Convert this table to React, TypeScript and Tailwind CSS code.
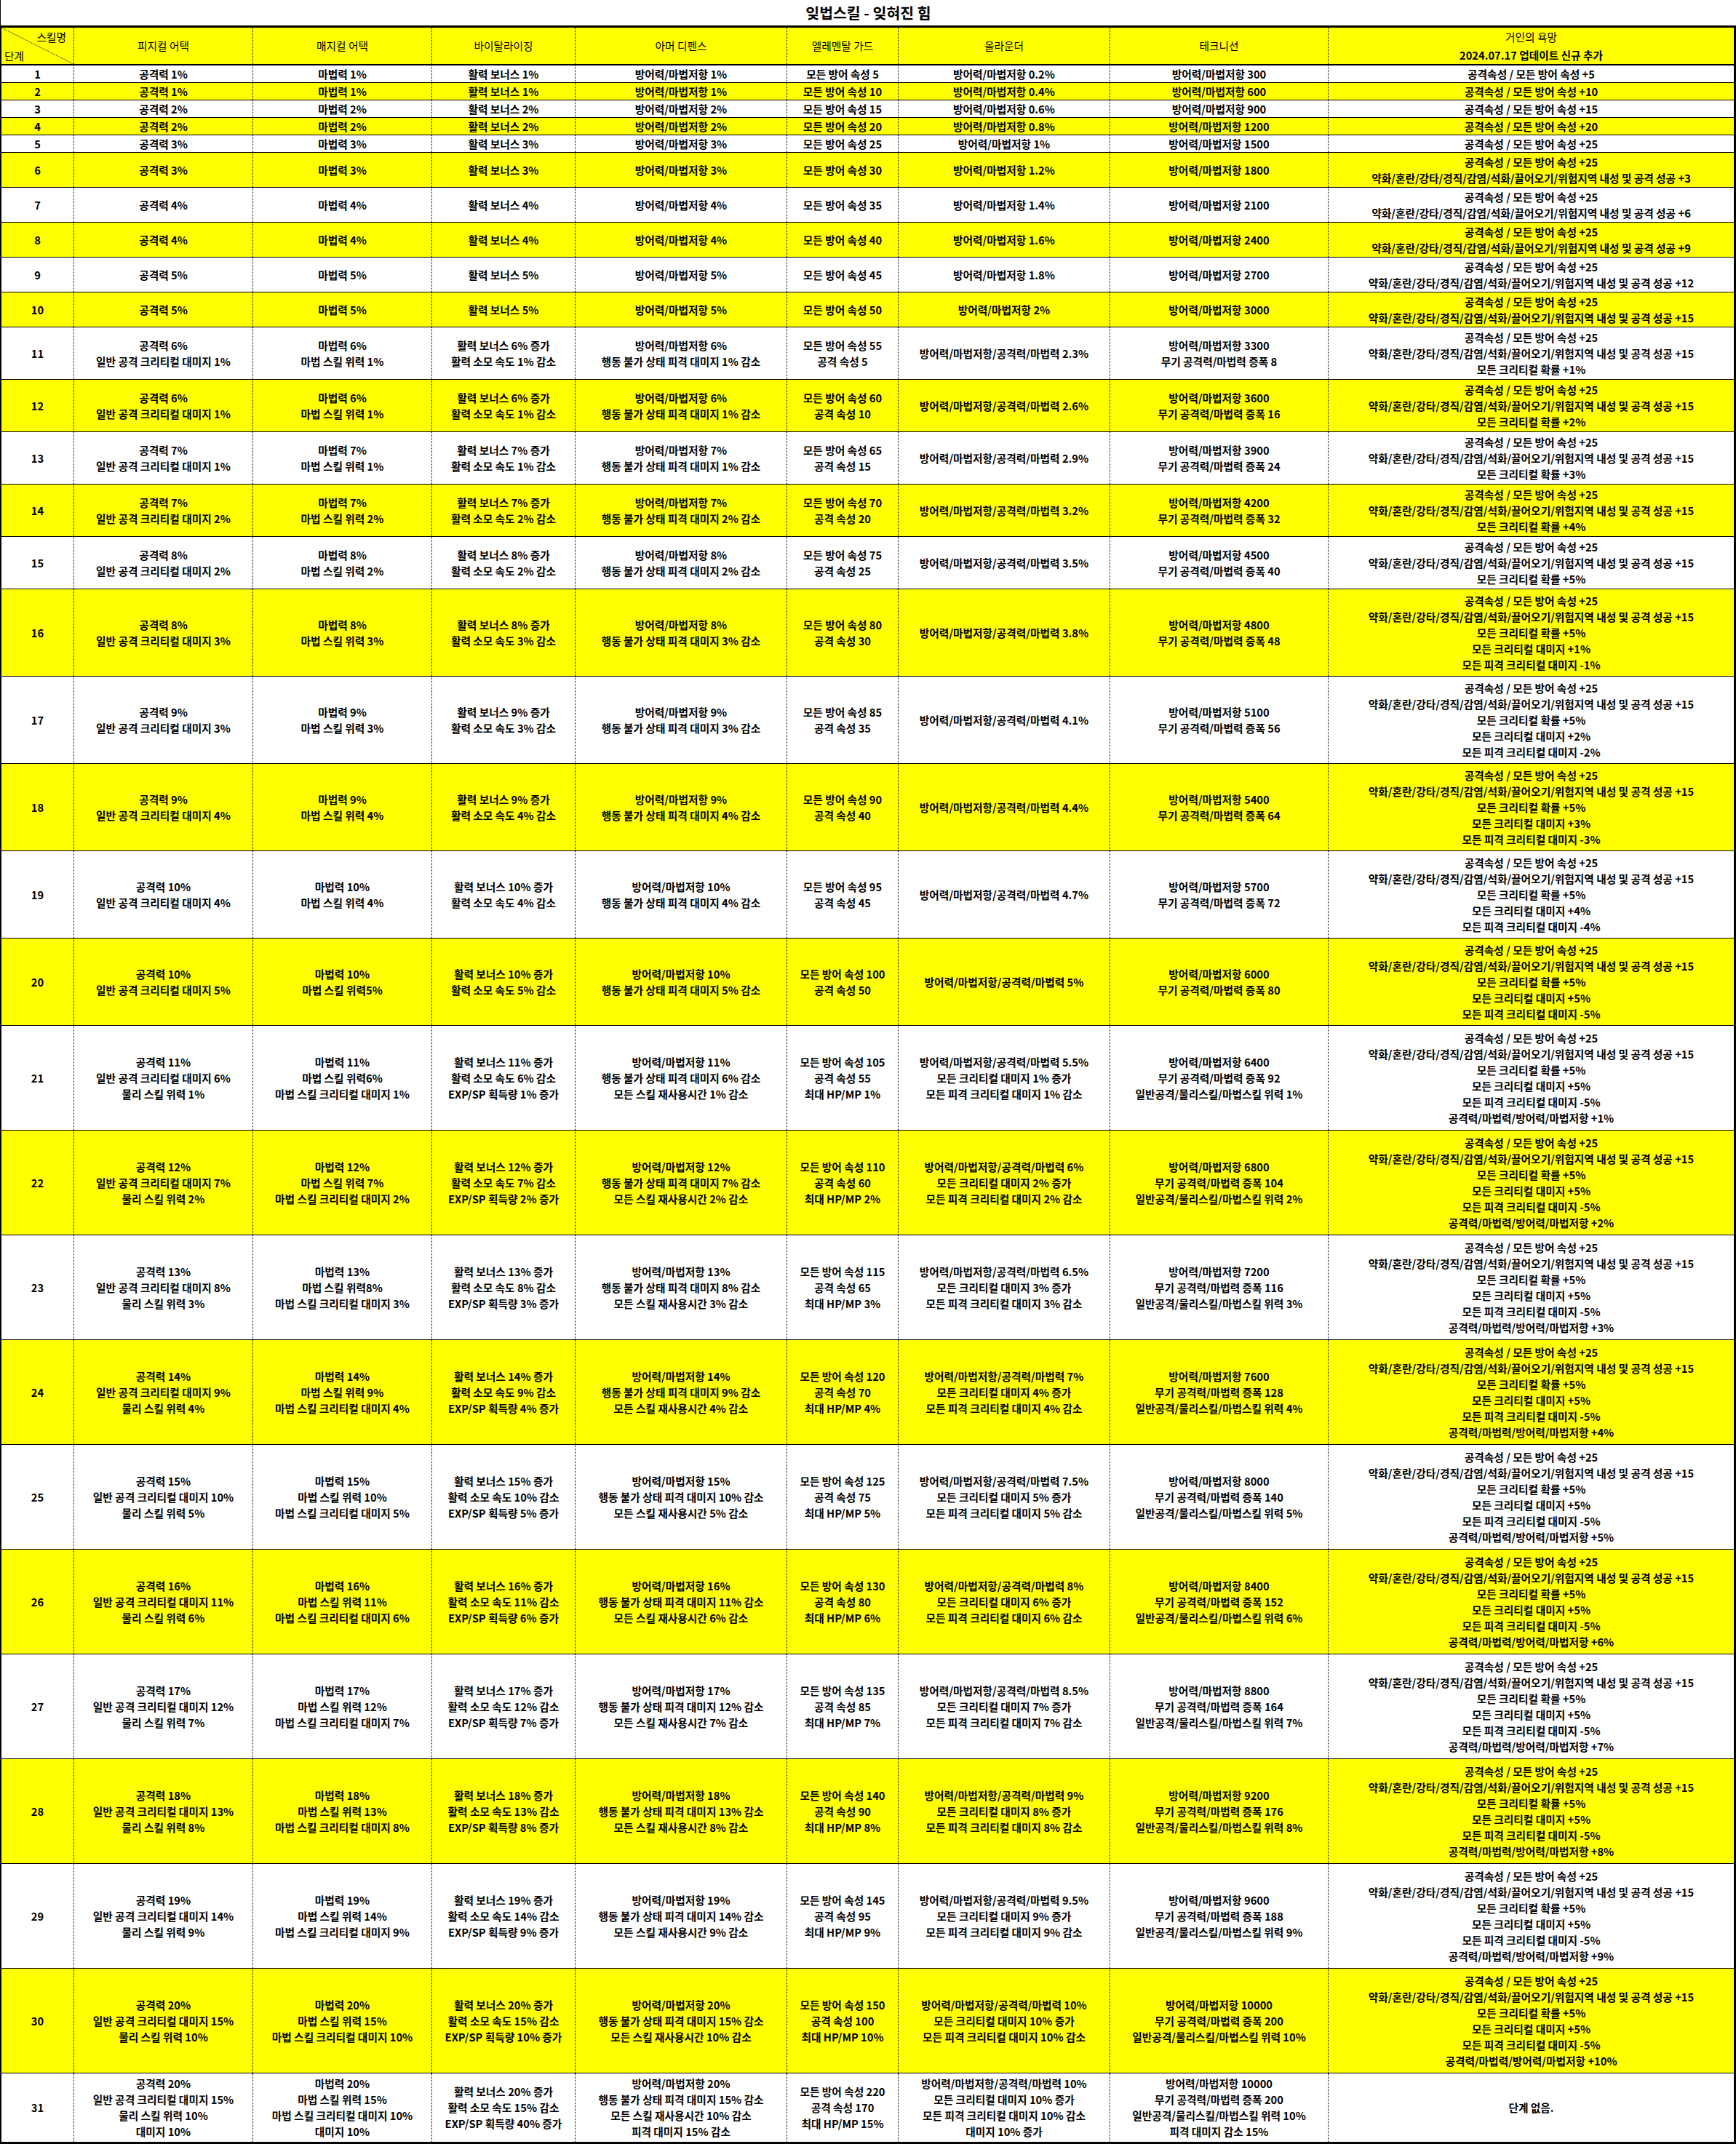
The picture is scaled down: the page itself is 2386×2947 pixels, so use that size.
import React from "react";

const GRID =
  "grid grid-cols-[100px_246px_246px_197px_291px_153px_291px_300px_557px]";

const HEADERS = [
  "피지컬 어택",
  "매지컬 어택",
  "바이탈라이징",
  "아머 디펜스",
  "엘레멘탈 가드",
  "올라운더",
  "테크니션",
];

// 11~20단계 크리티컬/소모 속도 값
const MID = [1, 1, 1, 2, 2, 3, 3, 4, 4, 5];

function fmt(v: number): string {
  return String(parseFloat(v.toFixed(1)));
}

function physical(n: number): string[] {
  const a = Math.ceil(n / 2);
  if (n <= 10) return [`공격력 ${a}%`];
  if (n <= 20) return [`공격력 ${a}%`, `일반 공격 크리티컬 대미지 ${MID[n - 11]}%`];
  if (n <= 30)
    return [
      `공격력 ${n - 10}%`,
      `일반 공격 크리티컬 대미지 ${n - 15}%`,
      `물리 스킬 위력 ${n - 20}%`,
    ];
  return ["공격력 20%", "일반 공격 크리티컬 대미지 15%", "물리 스킬 위력 10%", "대미지 10%"];
}

function magical(n: number): string[] {
  const a = Math.ceil(n / 2);
  // 원본 표의 띄어쓰기 그대로
  const gap = n === 20 || n === 21 || n === 23 ? "" : " ";
  if (n <= 10) return [`마법력 ${a}%`];
  if (n <= 20) return [`마법력 ${a}%`, `마법 스킬 위력${gap}${MID[n - 11]}%`];
  if (n <= 30)
    return [
      `마법력 ${n - 10}%`,
      `마법 스킬 위력${gap}${n - 15}%`,
      `마법 스킬 크리티컬 대미지 ${n - 20}%`,
    ];
  return ["마법력 20%", "마법 스킬 위력 15%", "마법 스킬 크리티컬 대미지 10%", "대미지 10%"];
}

function vital(n: number): string[] {
  const a = Math.ceil(n / 2);
  if (n <= 10) return [`활력 보너스 ${a}%`];
  if (n <= 20) return [`활력 보너스 ${a}% 증가`, `활력 소모 속도 ${MID[n - 11]}% 감소`];
  if (n <= 30)
    return [
      `활력 보너스 ${n - 10}% 증가`,
      `활력 소모 속도 ${n - 15}% 감소`,
      `EXP/SP 획득량 ${n - 20}% 증가`,
    ];
  return ["활력 보너스 20% 증가", "활력 소모 속도 15% 감소", "EXP/SP 획득량 40% 증가"];
}

function armor(n: number): string[] {
  const a = Math.ceil(n / 2);
  if (n <= 10) return [`방어력/마법저항 ${a}%`];
  if (n <= 20)
    return [`방어력/마법저항 ${a}%`, `행동 불가 상태 피격 대미지 ${MID[n - 11]}% 감소`];
  if (n <= 30)
    return [
      `방어력/마법저항 ${n - 10}%`,
      `행동 불가 상태 피격 대미지 ${n - 15}% 감소`,
      `모든 스킬 재사용시간 ${n - 20}% 감소`,
    ];
  return [
    "방어력/마법저항 20%",
    "행동 불가 상태 피격 대미지 15% 감소",
    "모든 스킬 재사용시간 10% 감소",
    "피격 대미지 15% 감소",
  ];
}

function elemental(n: number): string[] {
  if (n <= 10) return [`모든 방어 속성 ${n * 5}`];
  if (n <= 20) return [`모든 방어 속성 ${n * 5}`, `공격 속성 ${(n - 10) * 5}`];
  if (n <= 30)
    return [`모든 방어 속성 ${n * 5}`, `공격 속성 ${(n - 10) * 5}`, `최대 HP/MP ${n - 20}%`];
  return ["모든 방어 속성 220", "공격 속성 170", "최대 HP/MP 15%"];
}

function allround(n: number): string[] {
  if (n <= 10) return [`방어력/마법저항 ${fmt(n * 0.2)}%`];
  if (n <= 20) return [`방어력/마법저항/공격력/마법력 ${fmt(2 + (n - 10) * 0.3)}%`];
  if (n <= 30)
    return [
      `방어력/마법저항/공격력/마법력 ${fmt(5 + (n - 20) * 0.5)}%`,
      `모든 크리티컬 대미지 ${n - 20}% 증가`,
      `모든 피격 크리티컬 대미지 ${n - 20}% 감소`,
    ];
  return [
    "방어력/마법저항/공격력/마법력 10%",
    "모든 크리티컬 대미지 10% 증가",
    "모든 피격 크리티컬 대미지 10% 감소",
    "대미지 10% 증가",
  ];
}

function technician(n: number): string[] {
  if (n <= 10) return [`방어력/마법저항 ${n * 300}`];
  if (n <= 20) return [`방어력/마법저항 ${n * 300}`, `무기 공격력/마법력 증폭 ${(n - 10) * 8}`];
  if (n <= 30)
    return [
      `방어력/마법저항 ${6000 + (n - 20) * 400}`,
      `무기 공격력/마법력 증폭 ${80 + (n - 20) * 12}`,
      `일반공격/물리스킬/마법스킬 위력 ${n - 20}%`,
    ];
  return [
    "방어력/마법저항 10000",
    "무기 공격력/마법력 증폭 200",
    "일반공격/물리스킬/마법스킬 위력 10%",
    "피격 대미지 감소 15%",
  ];
}

const RESIST = "약화/혼란/강타/경직/감염/석화/끌어오기/위험지역 내성 및 공격 성공";

function giant(n: number): string[] {
  if (n <= 5) return [`공격속성 / 모든 방어 속성 +${n * 5}`];
  if (n <= 10) return ["공격속성 / 모든 방어 속성 +25", `${RESIST} +${(n - 5) * 3}`];
  if (n <= 15)
    return ["공격속성 / 모든 방어 속성 +25", `${RESIST} +15`, `모든 크리티컬 확률 +${n - 10}%`];
  if (n <= 20)
    return [
      "공격속성 / 모든 방어 속성 +25",
      `${RESIST} +15`,
      "모든 크리티컬 확률 +5%",
      `모든 크리티컬 대미지 +${n - 15}%`,
      `모든 피격 크리티컬 대미지 -${n - 15}%`,
    ];
  if (n <= 30)
    return [
      "공격속성 / 모든 방어 속성 +25",
      `${RESIST} +15`,
      "모든 크리티컬 확률 +5%",
      "모든 크리티컬 대미지 +5%",
      "모든 피격 크리티컬 대미지 -5%",
      `공격력/마법력/방어력/마법저항 +${n - 20}%`,
    ];
  return ["단계 없음."];
}

function rowHeight(n: number): string {
  if (n <= 5) return "h-[24px]";
  if (n <= 10) return "h-[48px]";
  if (n <= 15) return "h-[72px]";
  if (n <= 20) return "h-[120px]";
  if (n <= 30) return "h-[144px]";
  return "h-[94px]";
}

function Cell({ lines, last }: { lines: string[]; last?: boolean }) {
  return (
    <div
      className={`flex flex-col items-center justify-center text-center whitespace-nowrap leading-[22px] ${
        last ? "" : "border-r border-dotted border-black"
      }`}
    >
      {lines.map((l, i) => (
        <div key={i}>{l}</div>
      ))}
    </div>
  );
}

function DataRow({ n }: { n: number }) {
  const cols = [
    physical(n),
    magical(n),
    vital(n),
    armor(n),
    elemental(n),
    allround(n),
    technician(n),
    giant(n),
  ];
  return (
    <div
      className={`${GRID} ${rowHeight(n)} ${n % 2 === 0 ? "bg-[#ffff00]" : "bg-white"} ${
        n < 31 ? "border-b border-black" : ""
      }`}
    >
      <Cell lines={[String(n)]} />
      {cols.map((c, i) => (
        <Cell key={i} lines={c} last={i === cols.length - 1} />
      ))}
    </div>
  );
}

export default function App() {
  const rows = Array.from({ length: 31 }, (_, i) => i + 1);

  return (
    <div className="w-[2386px] bg-white text-black font-['Noto_Sans_CJK_KR',sans-serif] text-[14.7px] font-bold">
      {/* 제목 */}
      <div className="h-[35px] border-l border-black flex items-center justify-center text-[20.5px] font-bold">
        잊법스킬 - 잊혀진 힘
      </div>

      <div className="border-t-[3px] border-l-2 border-r-[3px] border-b-[3px] border-black">
        {/* 헤더 */}
        <div className={`${GRID} h-[52px] bg-[#ffff00] border-b-2 border-black font-normal`}>
          <div className="relative flex flex-col justify-between border-r border-dotted border-black pl-[4px] pr-[10px] pt-[3px] pb-0">
            <svg className="absolute inset-0 h-full w-full" preserveAspectRatio="none" viewBox="0 0 100 50">
              <line x1="0" y1="0" x2="100" y2="50" stroke="black" strokeWidth="1" strokeDasharray="1 1" vectorEffect="non-scaling-stroke" />
            </svg>
            <span className="self-end leading-[20px]">스킬명</span>
            <span className="self-start leading-[22px]">단계</span>
          </div>
          {HEADERS.map((h) => (
            <div
              key={h}
              className="flex items-center justify-center border-r border-dotted border-black"
            >
              {h}
            </div>
          ))}
          <div className="flex flex-col items-center justify-center leading-[25px]">
            <div>거인의 욕망</div>
            <div className="font-bold">2024.07.17 업데이트 신규 추가</div>
          </div>
        </div>

        {rows.map((n) => (
          <DataRow key={n} n={n} />
        ))}
      </div>
    </div>
  );
}
